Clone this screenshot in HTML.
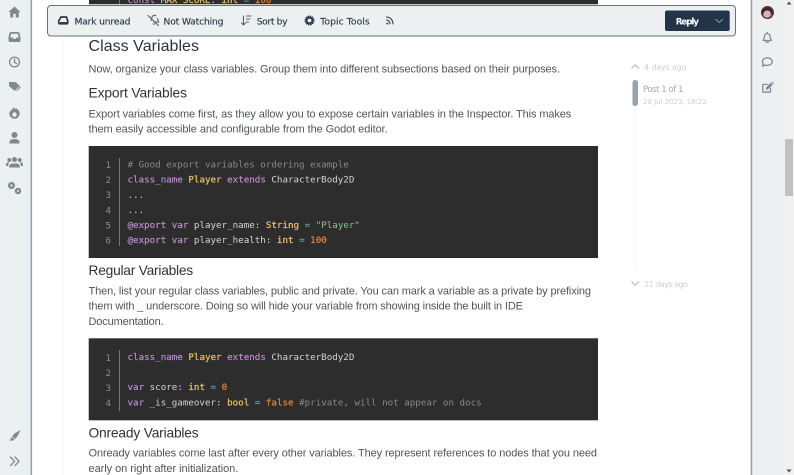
<!DOCTYPE html>
<html lang="en"><head><meta charset="utf-8"><title>Class Variables</title>
<style>
html,body{margin:0;padding:0;width:794px;height:475px;overflow:hidden;background:#fff}
svg{display:block;filter:blur(.3px)}
text{white-space:pre}
.b{font-family:"Liberation Sans",sans-serif;font-size:11px;fill:#50555a}
.h1{font-family:"Liberation Sans",sans-serif;font-size:16px;fill:#2e3338}
.h2{font-family:"Liberation Sans",sans-serif;font-size:13.800px;fill:#2e3338}
.t{font-family:"DejaVu Sans","Liberation Sans",sans-serif;font-size:9.200px;fill:#2b3a4a;stroke:#2b3a4a;stroke-width:.15}
.m{font-family:"DejaVu Sans Mono","Liberation Mono",monospace;font-size:9.200px;fill:#d4d4d4}
.n{font-family:"DejaVu Sans Mono","Liberation Mono",monospace;font-size:9.200px;fill:#8e8e8e}
.p{fill:#bb8cc9;stroke:#bb8cc9;stroke-width:.2}.y{fill:#e8bf5e;stroke:#e8bf5e;stroke-width:.25}.o{fill:#e0803c;stroke:#e0803c;stroke-width:.25}.c{fill:#8a8a8a}.g{fill:#8bc48a}.q{fill:#56c2c2}
.s{font-family:"DejaVu Sans","Liberation Sans",sans-serif;font-size:8px;fill:#cfcfcf}
.i{fill:#7d8a90}.l{fill:none;stroke:#7d8a90;stroke-width:1.300;stroke-linecap:round;stroke-linejoin:round}
.k{fill:none;stroke:#2b3a4a;stroke-width:1.100;stroke-linecap:round;stroke-linejoin:round}
</style></head><body>
<svg width="794" height="475" viewBox="0 0 794 475" xmlns="http://www.w3.org/2000/svg">
<rect width="794" height="475" fill="#fff"/>
<!-- side panels -->
<rect x="0" y="0" width="31" height="475" fill="#edf0f1"/>
<rect x="30.500" y="0" width="1.600" height="475" fill="#98a3ae"/>
<rect x="752" y="0" width="32" height="475" fill="#edf0f1"/>
<rect x="750.600" y="0" width="1.600" height="475" fill="#98a3ae"/>
<rect x="62.500" y="0" width="1" height="475" fill="#f3f4f5"/>
<!-- scrollbar -->
<rect x="784" y="0" width="10" height="475" fill="#f1f1f1"/>
<rect x="785" y="139" width="8" height="57" fill="#c1c1c1"/>
<path d="M789 1.500l2.500 3h-5zM789 472.500l2.500-3h-5z" fill="#505050"/>

<!-- left icons -->
<path class="i" d="M14.500 6.500L8.500 12h1.700v5.500h3v-3.600h2.600v3.600h3V12h1.700z"/>
<path class="i" d="M11 32h7c.8 0 1.300.5 1.500 1.200l1 4v3c0 1-.7 1.800-1.700 1.800h-8.600c-1 0-1.700-.8-1.700-1.800v-3l1-4c.2-.7.700-1.200 1.500-1.200z"/>
<path d="M11.200 33.800h6.600l.9 3.700h-2.300l-.9 1.400h-2l-.9-1.400h-2.300z" fill="#edf0f1"/>
<circle class="l" cx="14.500" cy="62" r="4.900"/><path class="l" d="M14.500 59v3.200l2 1.300"/>
<path class="i" d="M9 82h5.500l4.500 4.500-4.200 4.500-5.800-5z"/><path class="i" d="M15.800 82l5 5.200-3.600 3.900-.8-.6 2.900-3.300-4.600-5.200z"/>
<path class="i" d="M13.700 107c.6 1.600 2 2.300 2.600 1.400 2 1.300 3.400 3.200 3.400 5.200a5.200 5.200 0 0 1-10.400 0c0-2.600 3.400-3.900 4.400-6.600z"/><path d="M14.500 111.500c.8 1.300 2.200 1.800 2.200 3.200a2.200 2.200 0 0 1-4.400 0c0-1.400 1.500-1.900 2.200-3.200z" fill="#edf0f1"/>
<circle class="i" cx="14.500" cy="135" r="3"/><path class="i" d="M9.500 143.500v-1.400c0-2 2-3.100 5-3.100s5 1.100 5 3.100v1.400z"/>
<circle class="i" cx="14.500" cy="159.500" r="2.500"/><circle class="i" cx="9.300" cy="160" r="2"/><circle class="i" cx="19.700" cy="160" r="2"/>
<path class="i" d="M9 167.500c0-2.800 1.800-4 3.200-4h4.600c1.400 0 3.200 1.200 3.200 4zM8 166H6v-1.500c0-1.500 1.200-2.200 3-2.200zM21 166h2v-1.500c0-1.500-1.200-2.200-3-2.200z"/>
<circle cx="11.500" cy="185.500" r="2.300" fill="none" stroke="#7d8a90" stroke-width="2.400"/>
<circle cx="18" cy="191" r="2.100" fill="none" stroke="#7d8a90" stroke-width="2.300"/>
<path class="i" d="M20.500 430l-6 3.500-2.500 3 3 2.500 2.700-3zM11.500 437l3 2.500c-1 1.300-3.300 1.300-5.200 1 1.300-.8 1.500-2 2.200-3.500z"/>
<path class="l" d="M10.500 457l4 4.300-4 4.300M15 457l4 4.300-4 4.300"/>

<!-- right icons -->
<clipPath id="av"><circle cx="767.500" cy="12.500" r="6.500"/></clipPath>
<g clip-path="url(#av)"><rect x="760" y="5" width="15" height="15" fill="#52303a"/><circle cx="767" cy="14" r="3.800" fill="#d9b3ae"/><path d="M762 14c-1-7 10-8 10-1l-2-2.500h-5l-1 2z" fill="#3a1a24"/><rect x="771" y="15" width="4" height="5" fill="#8a4a55"/></g>
<path class="l" d="M763 40.500c1.200-1 1.400-2.300 1.400-4a2.900 2.900 0 0 1 5.800 0c0 1.700.2 3 1.400 4zM767.300 32.500v1M766 42.200h2.600"/>
<path class="l" d="M767.300 57.800c3 0 4.900 1.800 4.900 3.800s-1.900 3.800-4.900 3.800c-.7 0-1.300-.1-1.900-.3l-2.900 1 .9-2.200c-.7-.7-1-1.500-1-2.300 0-2 1.900-3.800 4.900-3.800z"/>
<path class="l" d="M770.500 88v3.200a1 1 0 0 1-1 1h-5.800a1 1 0 0 1-1-1v-5.800a1 1 0 0 1 1-1h3.500"/>
<path class="i" d="M766 87.500l4.700-4.700 1.900 1.900-4.700 4.700-2.200.4zM771.300 82.300l.8-.8 1.900 1.900-.8.800z"/>

<!-- top partial code block -->
<rect x="89" y="0" width="509" height="5" fill="#2d2d2d"/>
<text class="m" y="3"><tspan x="127.500" class="p">const</tspan><tspan x="160.700" class="y">MAX_SCORE</tspan><tspan x="210.500">:</tspan><tspan x="221.500" class="y">int</tspan><tspan x="243.700" class="q">=</tspan><tspan x="254.800" class="o">100</tspan></text>
<rect x="119" y="0" width="1" height="5" fill="#777"/>

<!-- article -->
<text class="h1" x="88.500" y="51" textLength="110.500" lengthAdjust="spacing">Class Variables</text>
<text class="b" x="88.500" y="72.300" textLength="471.500" lengthAdjust="spacing">Now, organize your class variables. Group them into different subsections based on their purposes.</text>
<text class="h2" x="88.500" y="97.700" textLength="98.500" lengthAdjust="spacing">Export Variables</text>
<text class="b" x="88.500" y="117.500" textLength="482.800" lengthAdjust="spacing">Export variables come first, as they allow you to expose certain variables in the Inspector. This makes</text>
<text class="b" x="88.500" y="132.500" textLength="299.200" lengthAdjust="spacing">them easily accessible and configurable from the Godot editor.</text>

<rect x="88.700" y="146" width="509.300" height="112" fill="#2d2d2d"/>
<rect x="119" y="158" width="1" height="88" fill="#777"/>
<text class="n" x="111" y="168" text-anchor="end">1</text><text class="n" x="111" y="183.200" text-anchor="end">2</text><text class="n" x="111" y="198.200" text-anchor="end">3</text><text class="n" x="111" y="213.300" text-anchor="end">4</text><text class="n" x="111" y="228.400" text-anchor="end">5</text><text class="n" x="111" y="243.500" text-anchor="end">6</text>
<text class="m" x="127.500" y="167.500" xml:space="preserve"><tspan class="c"># Good export variables ordering example</tspan></text>
<text class="m" x="127.500" y="182.700" xml:space="preserve"><tspan class="p">class_name</tspan> <tspan class="y">Player</tspan> <tspan class="p">extends</tspan> CharacterBody2D</text>
<text class="m" x="127.500" y="197.800">...</text>
<text class="m" x="127.500" y="212.900">...</text>
<text class="m" x="127.500" y="228" xml:space="preserve"><tspan class="p">@export</tspan> <tspan class="p">var</tspan> player_name: <tspan class="y">String</tspan> <tspan class="q">=</tspan> <tspan class="g">"Player"</tspan></text>
<text class="m" x="127.500" y="243.100" xml:space="preserve"><tspan class="p">@export</tspan> <tspan class="p">var</tspan> player_health: <tspan class="y">int</tspan> <tspan class="q">=</tspan> <tspan class="o">100</tspan></text>

<text class="h2" x="88.500" y="275" textLength="104.700" lengthAdjust="spacing">Regular Variables</text>
<text class="b" x="88.500" y="294.700" textLength="502.500" lengthAdjust="spacing">Then, list your regular class variables, public and private. You can mark a variable as a private by prefixing</text>
<text class="b" x="88.500" y="309.700" textLength="434.500" lengthAdjust="spacing">them with _ underscore. Doing so will hide your variable from showing inside the built in IDE</text>
<text class="b" x="88.500" y="325" textLength="75.200" lengthAdjust="spacing">Documentation.</text>

<rect x="88.700" y="338.300" width="509.300" height="82" fill="#2d2d2d"/>
<rect x="119" y="350" width="1" height="61" fill="#777"/>
<text class="n" x="111" y="361" text-anchor="end">1</text><text class="n" x="111" y="376" text-anchor="end">2</text><text class="n" x="111" y="391" text-anchor="end">3</text><text class="n" x="111" y="406" text-anchor="end">4</text>
<text class="m" x="127.500" y="360" xml:space="preserve"><tspan class="p">class_name</tspan> <tspan class="y">Player</tspan> <tspan class="p">extends</tspan> CharacterBody2D</text>
<text class="m" x="127.500" y="390.200" xml:space="preserve"><tspan class="p">var</tspan> score: <tspan class="y">int</tspan> <tspan class="q">=</tspan> <tspan class="o">0</tspan></text>
<text class="m" x="127.500" y="405.300" xml:space="preserve"><tspan class="p">var</tspan> _is_gameover: <tspan class="y">bool</tspan> <tspan class="q">=</tspan> <tspan class="o">false</tspan> <tspan class="c">#private, will not appear on docs</tspan></text>

<text class="h2" x="88.500" y="437.700" textLength="110.200" lengthAdjust="spacing">Onready Variables</text>
<text class="b" x="88.500" y="456.700" textLength="508.500" lengthAdjust="spacing">Onready variables come last after every other variables. They represent references to nodes that you need</text>
<text class="b" x="88.500" y="472" textLength="149.800" lengthAdjust="spacing">early on right after initialization.</text>

<!-- timeline -->
<path d="M631.500 68.500l3.700-3.700 3.700 3.700M631.500 281.500l3.700 3.700 3.700-3.700" fill="none" stroke="#a9b1b8" stroke-width="1"/>
<text class="s" x="644" y="70" textLength="42.500" lengthAdjust="spacing">4 days ago</text>
<rect x="632.500" y="80" width="5.500" height="26" rx="2.500" fill="#98a3ae"/>
<rect x="635" y="110" width="1" height="160" fill="#f6f7f8"/>
<text class="s" x="643" y="92" textLength="40.500" lengthAdjust="spacing" style="fill:#aaa;font-size:8.600px">Post 1 of 1</text>
<text class="s" x="643" y="104" textLength="64" lengthAdjust="spacing" style="font-size:7.400px;fill:#d2d2d2">28 Jul 2023, 18:22</text>
<text class="s" x="644" y="287" textLength="44" lengthAdjust="spacing">21 days ago</text>

<!-- toolbar -->
<rect x="47.500" y="5.500" width="688" height="31" rx="3.500" fill="#edf0f1" stroke="#fff" stroke-width="2.500"/>
<rect x="47.500" y="5.500" width="688" height="30.500" rx="3.500" fill="#edf0f1" stroke="#66727b" stroke-width="1"/>
<path d="M61 17h5.500l1.200 3.800v2a1 1 0 0 1-1 1h-6.900a1 1 0 0 1-1-1v-2z" fill="#edf0f1" stroke="#2b3a4a" stroke-width="1.700" stroke-linejoin="round"/>
<path d="M60 22h7.500v2h-7.500z" fill="#2b3a4a"/>
<text class="t" x="74.500" y="24.300" textLength="56" lengthAdjust="spacing">Mark unread</text>
<path class="k" style="stroke:#56626c" d="M151 20.500c.8-.7.900-1.500.900-2.700a2.500 2.500 0 0 1 3.900-2M157.500 18.500c.1 1.300.4 2.500 1.300 3.500h-5M148 15.500l10.500 10M153 24h2"/>
<text class="t" x="163.500" y="24.300" textLength="60" lengthAdjust="spacing">Not Watching</text>
<path class="k" style="stroke:#56626c" d="M243.500 16v9M241.500 23l2 2 2-2M246.500 16h4.500M246.500 19h3.500M246.500 22h2"/>
<text class="t" x="256.700" y="24.300" textLength="30.800" lengthAdjust="spacing">Sort by</text>
<circle cx="309.500" cy="20.500" r="2.900" fill="none" stroke="#2b3a4a" stroke-width="2"/>
<circle cx="309.500" cy="20.500" r="4.300" fill="none" stroke="#2b3a4a" stroke-width="1.400" stroke-dasharray="1.600 .65"/>
<text class="t" x="320.300" y="24.300" textLength="49.400" lengthAdjust="spacing">Topic Tools</text>
<path class="k" d="M386.500 17c3.600 0 6.500 2.900 6.500 7M386.500 20c2.100 0 3.600 1.700 3.600 4"/><circle cx="387.300" cy="23.500" r="1" fill="#2b3a4a"/>
<rect x="665" y="10.500" width="64.700" height="20.500" rx="2" fill="#223548"/>
<text x="675.700" y="24.300" textLength="23.300" lengthAdjust="spacing" style="font:bold 8.800px 'DejaVu Sans','Liberation Sans',sans-serif;fill:#fff">Reply</text>
<path d="M715.500 19l3.700 3.500 3.700-3.500" fill="none" stroke="#8795a3" stroke-width="1"/>
</svg>
</body></html>
